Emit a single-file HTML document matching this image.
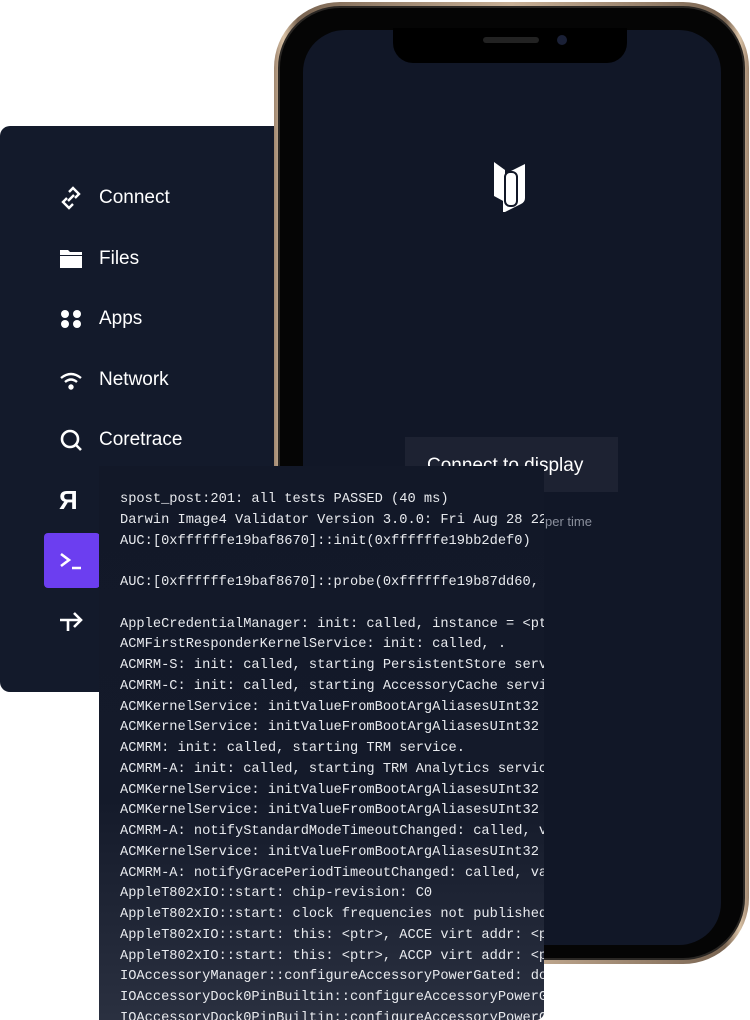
<!DOCTYPE html>
<html><head><meta charset="utf-8"><style>
*{margin:0;padding:0;box-sizing:border-box}
body{width:750px;height:1020px;background:#fff;position:relative;overflow:hidden;font-family:"Liberation Sans",sans-serif}
.side{position:absolute;left:0;top:126px;width:290px;height:566px;background:#131a2b;border-radius:10px}
.item{position:absolute;left:59px;height:30px;display:flex;align-items:center;color:#fff;font-size:19px}
.item svg{width:24px;height:24px;margin-right:16px}
.active{position:absolute;left:44px;top:533px;width:56px;height:55px;background:#6c3ef0;border-radius:4px}
.phone{position:absolute;left:274px;top:2px;width:475px;height:962px;border-radius:66px;background:linear-gradient(90deg,#a08770,#d9c2a6 2%,#7a6552 5%,#c8b096 50%,#7a6552 95%,#d9c2a6 98%,#a08770)}
.bez{position:absolute;left:4px;top:4px;right:4px;bottom:4px;border-radius:62px;background:#050505;border:2px solid #2a2724}
.screen{position:absolute;left:303px;top:30px;width:418px;height:915px;border-radius:42px;background:#111727}
.notch{position:absolute;left:393px;top:28px;width:234px;height:35px;background:#000;border-radius:0 0 20px 20px}
.term{position:absolute;left:99px;top:466px;width:445px;height:554px;background:linear-gradient(180deg,#121828 0%,#141a2a 60%,#2a3040 100%);border-radius:0 0 8px 0;overflow:hidden;padding:24px 0 0 21px;font-family:"Liberation Mono",monospace;font-size:13.7px;line-height:20.75px;color:#e8eaee;white-space:pre}
.btn{position:absolute;left:405px;top:437px;width:213px;height:55px;background:#1d2232;color:#fff;font-size:19px;padding:18px 0 0 22px}
</style></head><body>
<div class="side">
<div class="active" style="top:407px"></div>
<div class="item" style="top:57px"><svg viewBox="0 0 24 24" fill="none" stroke="#fff" stroke-width="2.4"><path d="M10 6l4-4 6 6-4 4M14 18l-4 4-6-6 4-4M9 15l6-6"/></svg>Connect</div>
<div class="item" style="top:118px"><svg viewBox="0 0 24 24" fill="#fff"><path d="M1 3h8l2 2h12v3H1z M1 9h22v12H1z"/></svg>Files</div>
<div class="item" style="top:178px"><svg viewBox="0 0 24 24" fill="#fff"><circle cx="6" cy="7" r="4"/><circle cx="18" cy="7" r="4"/><circle cx="6" cy="17" r="4"/><circle cx="18" cy="17" r="4"/></svg>Apps</div>
<div class="item" style="top:239px"><svg viewBox="0 0 24 24" fill="none" stroke="#fff" stroke-width="2.4"><path d="M2 10q10-8 20 0M6 14q6-5 12 0"/><circle cx="12" cy="19" r="1.5" fill="#fff"/></svg>Network</div>
<div class="item" style="top:299px"><svg viewBox="0 0 24 24" fill="none" stroke="#fff" stroke-width="2.6"><circle cx="11" cy="11" r="8"/><path d="M17 17l5 5"/></svg>Coretrace</div>
<div class="item" style="top:359px;font-weight:bold;font-size:26px"><span style="width:24px;margin-right:16px;display:inline-block">Я</span></div>
<div class="item" style="top:420px"><svg viewBox="0 0 24 24" fill="none" stroke="#fff" stroke-width="2.6"><path d="M2 5l8 6-8 6M13 19h9"/></svg></div>
<div class="item" style="top:480px"><svg viewBox="0 0 24 24" fill="none" stroke="#fff" stroke-width="2.6"><path d="M1 11h21M15 4l7 7-7 7M9 11v11"/></svg></div>
</div>
<div class="phone"><div class="bez"></div></div>
<div class="screen"></div>
<div class="notch"><div style="position:absolute;left:90px;top:9px;width:56px;height:6px;border-radius:3px;background:#222"></div><div style="position:absolute;left:164px;top:7px;width:10px;height:10px;border-radius:5px;background:#1a2036"></div></div>
<svg style="position:absolute;left:493px;top:162px" width="34" height="52" viewBox="0 0 34 52"><path d="M1 0 L12 8 V40 L1 34Z" fill="#fff"/><path d="M10 50 L10 18 Q10 12 16 10 L32 2 V36 Q32 40 28 42 L12 50Z" fill="#fff"/><rect x="12" y="10" width="12" height="34" rx="5" fill="none" stroke="#111727" stroke-width="2"/></svg>
<div class="btn">Connect to display</div>
<div style="position:absolute;left:545px;top:514px;color:#8a8f9c;font-size:13px">per time</div>
<div class="term">spost_post:201: all tests PASSED (40 ms)
Darwin Image4 Validator Version 3.0.0: Fri Aug 28 22
AUC:[0xffffffe19baf8670]::init(0xffffffe19bb2def0)

AUC:[0xffffffe19baf8670]::probe(0xffffffe19b87dd60,

AppleCredentialManager: init: called, instance = &lt;pt
ACMFirstResponderKernelService: init: called, .
ACMRM-S: init: called, starting PersistentStore serv
ACMRM-C: init: called, starting AccessoryCache servi
ACMKernelService: initValueFromBootArgAliasesUInt32
ACMKernelService: initValueFromBootArgAliasesUInt32
ACMRM: init: called, starting TRM service.
ACMRM-A: init: called, starting TRM Analytics servic
ACMKernelService: initValueFromBootArgAliasesUInt32
ACMKernelService: initValueFromBootArgAliasesUInt32
ACMRM-A: notifyStandardModeTimeoutChanged: called, v
ACMKernelService: initValueFromBootArgAliasesUInt32
ACMRM-A: notifyGracePeriodTimeoutChanged: called, va
AppleT802xIO::start: chip-revision: C0
AppleT802xIO::start: clock frequencies not published
AppleT802xIO::start: this: &lt;ptr&gt;, ACCE virt addr: &lt;p
AppleT802xIO::start: this: &lt;ptr&gt;, ACCP virt addr: &lt;p
IOAccessoryManager::configureAccessoryPowerGated: do
IOAccessoryDock0PinBuiltin::configureAccessoryPowerG
IOAccessoryDock0PinBuiltin::configureAccessoryPowerG</div>
</body></html>
